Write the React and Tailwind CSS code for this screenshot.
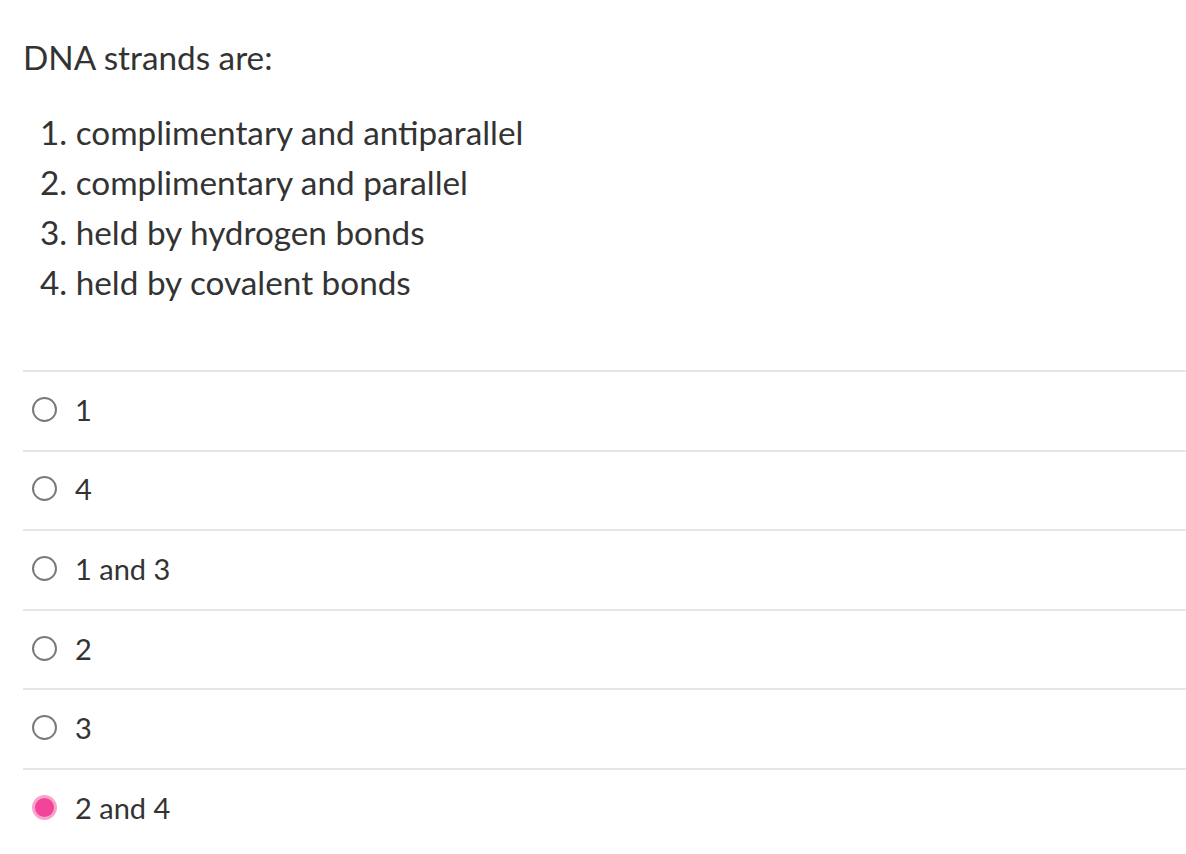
export default function App() {
  const items = [
    "complimentary and antiparallel",
    "complimentary and parallel",
    "held by hydrogen bonds",
    "held by covalent bonds",
  ];
  const options = ["1", "4", "1 and 3", "2", "3", "2 and 4"];
  return (
    <div className="w-[1186px] h-[854px] bg-white text-[#333333] overflow-hidden" style={{ fontFamily: "Lato, 'Liberation Sans', sans-serif" }}>
      <div className="pl-[23px] pt-[36px]">
        <div className="text-[33.3px] leading-[42px]">DNA strands are:</div>
        <ol className="mt-[29px] pl-[17px] text-[33.3px] leading-[50px]">
          {items.map((t, i) => (
            <li key={i}>{i + 1}. {t}</li>
          ))}
        </ol>
        <div className="mt-[63px]">
          {options.map((o, i) => (
            <div key={i} className="border-t-2 border-[#e6e6e6] h-[79.6px] flex items-center gap-[18px] pl-[9px] pb-[3px]">
              {i === options.length - 1 ? (
                <span className="w-[25px] h-[25px] rounded-full bg-[#f2459a] border-[3px] border-[#f7a3cb] shrink-0" />
              ) : (
                <span className="w-[25px] h-[25px] rounded-full border-[2px] border-[#7a7a7a] shrink-0" />
              )}
              <span className="text-[29px] leading-none">{o}</span>
            </div>
          ))}
        </div>
      </div>
    </div>
  );
}
